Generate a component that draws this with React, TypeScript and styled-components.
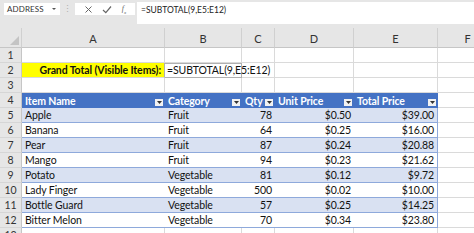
import React from 'react';
import styled, { createGlobalStyle } from 'styled-components';

const GlobalStyle = createGlobalStyle`
  html, body {
    margin: 0;
    padding: 0;
    background: #ffffff;
  }
  body {
    font-family: Lato, 'Open Sans', sans-serif;
  }
`;

const columns = ['A', 'B', 'C', 'D', 'E', 'F'];
const columnWidths = '22px 143px 77px 33px 79px 84px 60px';

interface Item {
  name: string;
  category: string;
  qty: number;
  unit: string;
  total: string;
}

const items: Item[] = [
  { name: 'Apple', category: 'Fruit', qty: 78, unit: '$0.50', total: '$39.00' },
  { name: 'Banana', category: 'Fruit', qty: 64, unit: '$0.25', total: '$16.00' },
  { name: 'Pear', category: 'Fruit', qty: 87, unit: '$0.24', total: '$20.88' },
  { name: 'Mango', category: 'Fruit', qty: 94, unit: '$0.23', total: '$21.62' },
  { name: 'Potato', category: 'Vegetable', qty: 81, unit: '$0.12', total: '$9.72' },
  { name: 'Lady Finger', category: 'Vegetable', qty: 500, unit: '$0.02', total: '$10.00' },
  { name: 'Bottle Guard', category: 'Vegetable', qty: 57, unit: '$0.25', total: '$14.25' },
  { name: 'Bitter Melon', category: 'Vegetable', qty: 70, unit: '$0.34', total: '$23.80' },
];

const headers = ['Item Name', 'Category', 'Qty', 'Unit Price', 'Total Price'];

export default function App() {
  return (
    <Page>
      <GlobalStyle />
      <FormulaBar>
        <NameBox>
          <span>ADDRESS</span>
          <Caret />
        </NameBox>
        <Grip>⋮</Grip>
        <ActionBox>
          <svg width="9" height="9" viewBox="0 0 9 9">
            <path d="M1.5 1.5 L7.5 7.5 M7.5 1.5 L1.5 7.5" stroke="#666" strokeWidth="1" />
          </svg>
          <svg width="10" height="9" viewBox="0 0 10 9">
            <path d="M1 5 L3.8 7.6 L9 1.5" stroke="#666" strokeWidth="1.2" fill="none" />
          </svg>
          <Fx>
            f<sub>x</sub>
          </Fx>
        </ActionBox>
        <FormulaInput>=SUBTOTAL(9,E5:E12)</FormulaInput>
      </FormulaBar>

      <Sheet>
        <Corner>
          <CornerMark />
        </Corner>
        {columns.map((c) => (
          <ColHeader key={c}>{c}</ColHeader>
        ))}

        <RowHeader>1</RowHeader>
        {columns.map((c) => (
          <Cell key={c} />
        ))}

        <RowHeader>2</RowHeader>
        <LabelCell>Grand Total (Visible Items):</LabelCell>
        <FormulaCell>=SUBTOTAL(9,E5:E12)</FormulaCell>
        <Cell />
        <Cell />
        <Cell />
        <Cell />

        <RowHeader>3</RowHeader>
        {columns.map((c) => (
          <Cell key={c} />
        ))}

        <RowHeader>4</RowHeader>
        {headers.map((h) => (
          <HeadCell key={h}>
            <span>{h}</span>
            <FilterButton>
              <svg width="5" height="3" viewBox="0 0 5 3">
                <path d="M0 0 H5 L2.5 3 Z" fill="#333" />
              </svg>
            </FilterButton>
          </HeadCell>
        ))}
        <Cell />

        {items.map((it, i) => {
          const band = i % 2 === 0;
          return (
            <React.Fragment key={it.name}>
              <RowHeader>{i + 5}</RowHeader>
              <DataCell band={band}>{it.name}</DataCell>
              <DataCell band={band}>{it.category}</DataCell>
              <DataCell band={band} align="right">{it.qty}</DataCell>
              <DataCell band={band} align="right">{it.unit}</DataCell>
              <DataCell band={band} align="right" last>{it.total}</DataCell>
              <Cell />
            </React.Fragment>
          );
        })}

        <RowHeader>13</RowHeader>
        {columns.map((c) => (
          <Cell key={c} />
        ))}
      </Sheet>
    </Page>
  );
}

const Page = styled.div`
  width: 474px;
  height: 233px;
  overflow: hidden;
  background: #e6e6e6;
  font-family: Lato, 'Open Sans', sans-serif;
`;

const FormulaBar = styled.div`
  height: 28px;
  display: flex;
  align-items: flex-start;
  padding-top: 3px;
  box-sizing: border-box;
  background: #e6e6e6;
`;

const NameBox = styled.div`
  margin-left: 4px;
  width: 56px;
  height: 12px;
  background: #fff;
  display: flex;
  align-items: center;
  justify-content: space-between;
  padding: 0 4px 0 3px;
  box-sizing: border-box;
  font-size: 8px;
  color: #333;
  letter-spacing: 0.1px;
`;

const Caret = styled.span`
  width: 0;
  height: 0;
  border-left: 2px solid transparent;
  border-right: 2px solid transparent;
  border-top: 2px solid #555;
`;

const Grip = styled.span`
  width: 15px;
  text-align: center;
  font-size: 9px;
  line-height: 12px;
  color: #b0b0b0;
`;

const ActionBox = styled.div`
  width: 60px;
  height: 12px;
  background: #fff;
  display: flex;
  align-items: center;
  justify-content: space-around;
  padding: 0 4px;
  box-sizing: border-box;
`;

const Fx = styled.span`
  font-family: 'Liberation Serif', serif;
  font-style: italic;
  font-size: 8px;
  color: #666;
  sub {
    font-size: 5px;
  }
`;

const FormulaInput = styled.div`
  margin-left: 2px;
  flex: 1;
  height: 22px;
  margin-top: -1px;
  background: #fff;
  font-size: 8.5px;
  color: #222;
  padding: 3px 0 0 4px;
  box-sizing: border-box;
`;

const Sheet = styled.div`
  display: grid;
  grid-template-columns: ${columnWidths};
  grid-template-rows: 20px repeat(13, 15px);
  background: #fff;
`;

const Corner = styled.div`
  position: relative;
  background: #e6e6e6;
  border-right: 1px solid #d0d0d0;
  border-bottom: 1px solid #c6c6c6;
`;

const CornerMark = styled.div`
  position: absolute;
  right: 2px;
  bottom: 2px;
  width: 0;
  height: 0;
  border-left: 9px solid transparent;
  border-bottom: 9px solid #c4c4c4;
`;

const ColHeader = styled.div`
  background: #e6e6e6;
  border-right: 1px solid #d0d0d0;
  border-bottom: 1px solid #c6c6c6;
  display: flex;
  align-items: center;
  justify-content: center;
  font-size: 11px;
  color: #333;
  padding-top: 2px;
  box-sizing: border-box;
`;

const RowHeader = styled.div`
  background: #e6e6e6;
  border-right: 1px solid #c6c6c6;
  border-bottom: 1px solid #d6d6d6;
  display: flex;
  align-items: center;
  justify-content: center;
  font-size: 10.5px;
  color: #333;
  box-sizing: border-box;
`;

const Cell = styled.div`
  border-right: 1px solid #dadada;
  border-bottom: 1px solid #dadada;
  box-sizing: border-box;
`;

const LabelCell = styled.div`
  background: #ffff00;
  border-right: 1px solid #b0b0b0;
  border-bottom: 1px solid #dadada;
  box-sizing: border-box;
  font-size: 10.5px;
  letter-spacing: -0.1px;
  font-weight: 700;
  color: #111;
  text-align: right;
  padding-right: 3px;
  line-height: 15px;
  white-space: nowrap;
`;

const FormulaCell = styled.div`
  border: 1px solid #b0b0b0;
  border-left: none;
  box-sizing: border-box;
  font-size: 10.5px;
  letter-spacing: -0.1px;
  color: #111;
  line-height: 13px;
  padding-left: 2px;
  white-space: nowrap;
  overflow: visible;
  position: relative;
  z-index: 1;
`;

const HeadCell = styled.div`
  background: #4472c4;
  color: #fff;
  font-weight: 700;
  font-size: 10.5px;
  letter-spacing: -0.1px;
  display: flex;
  align-items: center;
  justify-content: space-between;
  padding: 0 2px 0 3px;
  box-sizing: border-box;
  white-space: nowrap;
`;

const FilterButton = styled.span`
  width: 8px;
  height: 7px;
  background: #f2f2f2;
  display: flex;
  align-items: center;
  justify-content: center;
  margin-top: 3px;
`;

const DataCell = styled.div<{ band: boolean; align?: string; last?: boolean }>`
  background: ${({ band }) => (band ? '#d9e1f2' : '#ffffff')};
  border-bottom: 1px solid #8ea9db;
  border-right: ${({ last }) => (last ? '1px solid #8ea9db' : 'none')};
  box-sizing: border-box;
  font-size: 10.5px;
  letter-spacing: -0.1px;
  color: #111;
  line-height: 14px;
  padding: 0 3px;
  text-align: ${({ align }) => align || 'left'};
  white-space: nowrap;
`;
